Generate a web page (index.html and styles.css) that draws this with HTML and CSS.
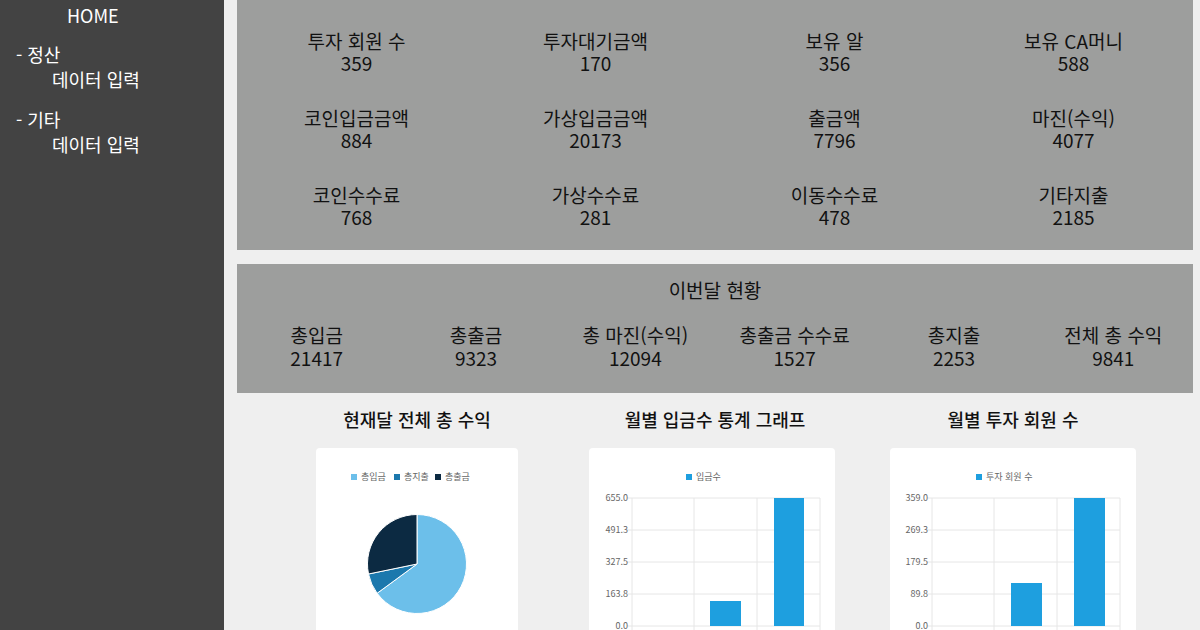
FILE: index.html
```html
<!DOCTYPE html>
<html lang="ko">
<head>
    <meta charset="UTF-8">
    <meta name="viewport" content="width=device-width, initial-scale=1.0">
    <title>관리자 대시보드</title>
    <link rel="stylesheet" href="styles.css">
</head>
<body>
<div class="layout">
    <nav class="sidebar">
        <div class="home">HOME</div>
        <div class="menu-group">
            <div class="menu-title">- 정산</div>
            <div class="menu-item">데이터 입력</div>
        </div>
        <div class="menu-group">
            <div class="menu-title">- 기타</div>
            <div class="menu-item">데이터 입력</div>
        </div>
    </nav>

    <main class="main">
        <section class="panel stats">
            <div class="stat"><div>투자 회원 수</div><div>359</div></div>
            <div class="stat"><div>투자대기금액</div><div>170</div></div>
            <div class="stat"><div>보유 알</div><div>356</div></div>
            <div class="stat"><div>보유 CA머니</div><div>588</div></div>
            <div class="stat"><div>코인입금금액</div><div>884</div></div>
            <div class="stat"><div>가상입금금액</div><div>20173</div></div>
            <div class="stat"><div>출금액</div><div>7796</div></div>
            <div class="stat"><div>마진(수익)</div><div>4077</div></div>
            <div class="stat"><div>코인수수료</div><div>768</div></div>
            <div class="stat"><div>가상수수료</div><div>281</div></div>
            <div class="stat"><div>이동수수료</div><div>478</div></div>
            <div class="stat"><div>기타지출</div><div>2185</div></div>
        </section>

        <section class="panel month">
            <div class="month-title">이번달 현황</div>
            <div class="month-row">
                <div class="stat"><div>총입금</div><div>21417</div></div>
                <div class="stat"><div>총출금</div><div>9323</div></div>
                <div class="stat"><div>총 마진(수익)</div><div>12094</div></div>
                <div class="stat"><div>총출금 수수료</div><div>1527</div></div>
                <div class="stat"><div>총지출</div><div>2253</div></div>
                <div class="stat"><div>전체 총 수익</div><div>9841</div></div>
            </div>
        </section>

        <section class="charts">
            <div class="chart-col">
                <h3 class="chart-title">현재달 전체 총 수익</h3>
                <div class="card card-small">
                    <svg width="202" height="230" viewBox="0 0 202 230">
                        <g class="legend">
                            <rect x="35" y="26" width="6" height="6" fill="#6cbfea"/>
                            <text x="45" y="32">총입금</text>
                            <rect x="78" y="26" width="6" height="6" fill="#1b78ad"/>
                            <text x="88" y="32">총지출</text>
                            <rect x="119" y="26" width="6" height="6" fill="#0c2a42"/>
                            <text x="129" y="32">총출금</text>
                        </g>
                        <g stroke="#fff" stroke-width="1">
                            <path d="M101,116 L101,66.5 A49.5,49.5 0 1 1 61.1,145.3 Z" fill="#6cbfea"/>
                            <path d="M101,116 L61.1,145.3 A49.5,49.5 0 0 1 52.5,126 Z" fill="#1b78ad"/>
                            <path d="M101,116 L52.5,126 A49.5,49.5 0 0 1 101,66.5 Z" fill="#0c2a42"/>
                        </g>
                    </svg>
                </div>
            </div>

            <div class="chart-col">
                <h3 class="chart-title">월별 입금수 통계 그래프</h3>
                <div class="card card-shift">
                    <svg width="246" height="230" viewBox="0 0 246 230">
                        <g class="legend">
                            <rect x="97" y="26" width="6" height="6" fill="#1e9fdf"/>
                            <text x="107" y="32">입금수</text>
                        </g>
                        <g class="grid">
                            <line x1="38" y1="50" x2="231" y2="50"/>
                            <line x1="38" y1="82" x2="231" y2="82"/>
                            <line x1="38" y1="114" x2="231" y2="114"/>
                            <line x1="38" y1="146" x2="231" y2="146"/>
                            <line x1="38" y1="178" x2="231" y2="178"/>
                            <line x1="43" y1="50" x2="43" y2="183"/>
                            <line x1="105" y1="50" x2="105" y2="183"/>
                            <line x1="168" y1="50" x2="168" y2="183"/>
                            <line x1="231" y1="50" x2="231" y2="183"/>
                        </g>
                        <g class="axis">
                            <text x="39" y="53">655.0</text>
                            <text x="39" y="85">491.3</text>
                            <text x="39" y="117">327.5</text>
                            <text x="39" y="149">163.8</text>
                            <text x="39" y="181">0.0</text>
                        </g>
                        <rect class="bar" x="121" y="153" width="31" height="25"/>
                        <rect class="bar" x="185" y="50" width="30" height="128"/>
                    </svg>
                </div>
            </div>

            <div class="chart-col">
                <h3 class="chart-title">월별 투자 회원 수</h3>
                <div class="card">
                    <svg width="246" height="230" viewBox="0 0 246 230">
                        <g class="legend">
                            <rect x="86" y="26" width="6" height="6" fill="#1e9fdf"/>
                            <text x="96" y="32">투자 회원 수</text>
                        </g>
                        <g class="grid">
                            <line x1="37" y1="50" x2="230" y2="50"/>
                            <line x1="37" y1="82" x2="230" y2="82"/>
                            <line x1="37" y1="114" x2="230" y2="114"/>
                            <line x1="37" y1="146" x2="230" y2="146"/>
                            <line x1="37" y1="178" x2="230" y2="178"/>
                            <line x1="42" y1="50" x2="42" y2="183"/>
                            <line x1="104" y1="50" x2="104" y2="183"/>
                            <line x1="167" y1="50" x2="167" y2="183"/>
                            <line x1="230" y1="50" x2="230" y2="183"/>
                        </g>
                        <g class="axis">
                            <text x="38" y="53">359.0</text>
                            <text x="38" y="85">269.3</text>
                            <text x="38" y="117">179.5</text>
                            <text x="38" y="149">89.8</text>
                            <text x="38" y="181">0.0</text>
                        </g>
                        <rect class="bar" x="121" y="135" width="31" height="43"/>
                        <rect class="bar" x="184" y="50" width="31" height="128"/>
                    </svg>
                </div>
            </div>
        </section>
    </main>
</div>
</body>
</html>
```

FILE: styles.css
```css
body {
    margin: 0;
    padding: 0;
    font-family: "Noto Sans CJK KR", "Noto Sans", sans-serif;
    background-color: #efefef;
    color: #111;
    overflow: hidden;
}

.layout {
    display: flex;
    min-height: 100vh;
}

.sidebar {
    width: 224px;
    flex-shrink: 0;
    background-color: #434343;
    color: #fff;
    font-size: 18px;
    line-height: 25px;
}

.home {
    padding: 3px 0 0 67px;
    margin-bottom: 14px;
}

.menu-group {
    margin-bottom: 15px;
}

.menu-title {
    padding-left: 16px;
}

.menu-item {
    padding-left: 52px;
}

.main {
    flex: 1;
    padding: 0 7px 0 13px;
}

.panel {
    background-color: #9d9e9d;
    font-size: 19px;
    line-height: 22px;
}

.stat {
    text-align: center;
}

.stats {
    display: grid;
    grid-template-columns: repeat(4, 1fr);
    row-gap: 33px;
    padding: 30px 0 22px;
}

.month {
    margin-top: 14px;
    padding: 15px 0 24px;
}

.month-title {
    text-align: center;
    margin-bottom: 22px;
}

.month-row {
    display: grid;
    grid-template-columns: repeat(6, 1fr);
    line-height: 23px;
}

.charts {
    display: grid;
    grid-template-columns: repeat(3, 298px);
    justify-content: center;
    margin-top: 13px;
}

.chart-col {
    display: flex;
    flex-direction: column;
    align-items: center;
}

.chart-title {
    margin: 0 0 16px;
    font-size: 18px;
    line-height: 26px;
    font-weight: 500;
}

.card {
    width: 246px;
    height: 230px;
    background-color: #fff;
    border-radius: 4px;
}

.card-small {
    width: 202px;
}

.card-shift {
    margin-right: 7px;
}

.card svg {
    display: block;
}

.legend text {
    font-size: 9px;
    fill: #666;
}

.axis text {
    font-size: 9px;
    fill: #666;
    text-anchor: end;
}

.grid line {
    stroke: #e6e6e6;
    stroke-width: 1;
}

.bar {
    fill: #1e9fdf;
}
```
